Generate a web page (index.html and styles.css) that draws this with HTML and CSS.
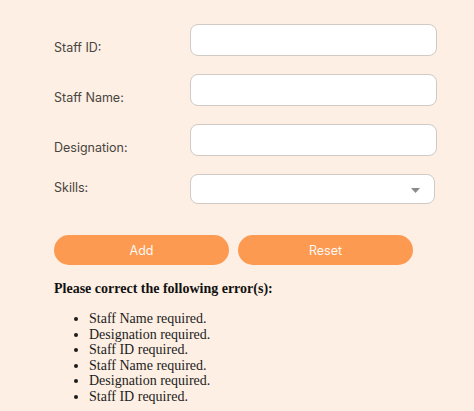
FILE: index.html
```html
<!DOCTYPE html>
<html>
<head>
<meta charset="utf-8">
<link rel="stylesheet" href="styles.css">
</head>
<body>
<div class="page">
  <form class="form">
    <div class="row">
      <label class="label">Staff ID:</label>
      <input class="field" type="text">
    </div>
    <div class="row">
      <label class="label">Staff Name:</label>
      <input class="field" type="text">
    </div>
    <div class="row">
      <label class="label">Designation:</label>
      <input class="field" type="text">
    </div>
    <div class="row row-select">
      <label class="label label-select">Skills:</label>
      <div class="select">
        <svg class="caret" width="9" height="5" viewBox="0 0 9 5"><path d="M0 0 H9 L4.5 5 Z" fill="#8a8a8a"/></svg>
      </div>
    </div>
    <div class="buttons">
      <button type="button" class="btn">Add</button>
      <button type="button" class="btn">Reset</button>
    </div>
  </form>
  <div class="errors">
    <h4 class="errors-title">Please correct the following error(s):</h4>
    <ul class="errors-list">
      <li>Staff Name required.</li>
      <li>Designation required.</li>
      <li>Staff ID required.</li>
      <li>Staff Name required.</li>
      <li>Designation required.</li>
      <li>Staff ID required.</li>
    </ul>
  </div>
</div>
</body>
</html>
```

FILE: styles.css
```css
html, body {
  margin: 0;
  padding: 0;
  background: #fdefe3;
}
.page {
  padding: 24px 0 0 54px;
  width: 420px;
  height: 387px;
  box-sizing: content-box;
  overflow: hidden;
}
.form {
  display: flex;
  flex-direction: column;
  gap: 18px;
}
.row {
  display: grid;
  grid-template-columns: 136px 247px;
  align-items: start;
}
.label {
  font-family: Inter, "Noto Sans", sans-serif;
  font-size: 12.5px;
  line-height: 15px;
  color: #48443f;
  padding-top: 15.5px;
}
.label-select {
  padding-top: 5.5px;
}
.field {
  box-sizing: border-box;
  width: 247px;
  height: 32px;
  margin: 0;
  border: 1px solid #cfcac6;
  border-radius: 8px;
  background: #fff;
  outline: none;
}
.select {
  box-sizing: border-box;
  width: 245px;
  height: 30px;
  border: 1px solid #cfcac6;
  border-radius: 8px;
  background: #fff;
  display: flex;
  align-items: center;
  justify-content: flex-end;
  padding-right: 14px;
}
.caret {
  display: block;
  margin-top: 2px;
}
.buttons {
  display: flex;
  gap: 9px;
  margin-top: 13px;
}
.btn {
  width: 175px;
  height: 30px;
  border: none;
  border-radius: 15px;
  background: #fd9a52;
  color: #fff7ef;
  font-family: Inter, "Noto Sans", sans-serif;
  font-size: 12.5px;
  padding: 0;
}
.errors {
  font-family: "Liberation Serif", "Times New Roman", serif;
  color: #111;
}
.errors-title {
  font-size: 14px;
  font-weight: bold;
  margin: 16px 0 14px 0;
  line-height: 16px;
}
.errors-list {
  margin: 0;
  padding-left: 35px;
  font-size: 14px;
  line-height: 15.6px;
  color: #1c1c1c;
}
```
